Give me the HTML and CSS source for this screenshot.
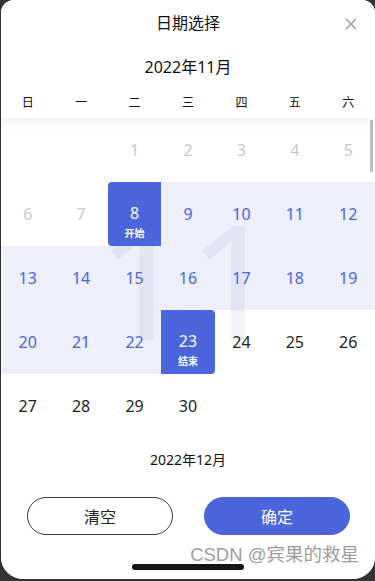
FILE: index.html
```html
<!DOCTYPE html>
<html lang="zh">
<head>
<meta charset="utf-8">
<meta name="viewport" content="width=device-width, initial-scale=1">
<title>日期选择</title>
<link rel="stylesheet" href="styles.css">
</head>
<body>
<div class="card">
  <div class="header">
    <div class="title">日期选择
      <svg class="close" viewBox="0 0 12 12" width="12" height="12"><path d="M1 1L11 11M11 1L1 11" stroke="#969799" stroke-width="1.4" fill="none"/></svg>
    </div>
    <div class="subtitle">2022年11月</div>
    <div class="weekdays">
      <span>日</span><span>一</span><span>二</span><span>三</span><span>四</span><span>五</span><span>六</span>
    </div>
  </div>
  <div class="body">
    <div class="days">
      <div class="mark">11</div>
      <div class="day"></div><div class="day"></div>
      <div class="day disabled">1</div><div class="day disabled">2</div><div class="day disabled">3</div><div class="day disabled">4</div><div class="day disabled">5</div>
      <div class="day disabled">6</div><div class="day disabled">7</div>
      <div class="day start">8<span class="info">开始</span></div>
      <div class="day mid">9</div><div class="day mid">10</div><div class="day mid">11</div><div class="day mid">12</div>
      <div class="day mid">13</div><div class="day mid">14</div><div class="day mid">15</div><div class="day mid">16</div><div class="day mid">17</div><div class="day mid">18</div><div class="day mid">19</div>
      <div class="day mid">20</div><div class="day mid">21</div><div class="day mid">22</div>
      <div class="day end">23<span class="info">结束</span></div>
      <div class="day">24</div><div class="day">25</div><div class="day">26</div>
      <div class="day">27</div><div class="day">28</div><div class="day">29</div><div class="day">30</div>
    </div>
    <div class="month-title">2022年12月</div>
  </div>
  <div class="scrollbar"></div>
  <div class="footer">
    <button class="btn clear">清空</button>
    <button class="btn confirm">确定</button>
  </div>
  <div class="home-bar"></div>
  <div class="wm">CSDN @宾果的救星</div>
</div>
</body>
</html>
```

FILE: styles.css
```css
html, body {
  margin: 0;
  padding: 0;
  background: #333333;
  width: 375px;
  height: 581px;
  overflow: hidden;
}
body {
  font-family: "Noto Sans", "Noto Sans CJK SC", sans-serif;
  color: #323233;
}
.card {
  position: relative;
  margin-left: 1px;
  width: 374px;
  height: 579px;
  background: #fff;
  border-radius: 13px 13px 22px 22px;
  overflow: hidden;
  display: flex;
  flex-direction: column;
}
.header {
  position: relative;
  z-index: 2;
  background: #fff;
  box-shadow: 0 2px 10px rgba(125, 126, 128, 0.16);
  flex: none;
}
.title {
  position: relative;
  height: 46px;
  line-height: 46px;
  text-align: center;
  font-size: 16px;
  color: #111;
}
.close {
  position: absolute;
  right: 18px;
  top: 18px;
  width: 12px;
  height: 12px;
}
.subtitle {
  height: 42px;
  line-height: 42px;
  text-align: center;
  font-size: 16px;
  color: #111;
}
.weekdays {
  display: grid;
  grid-template-columns: repeat(7, 1fr);
  height: 30px;
  line-height: 30px;
  font-size: 12px;
  text-align: center;
  color: #111;
}
.body {
  flex: 1;
  overflow: hidden;
  position: relative;
}
.days {
  position: relative;
  display: grid;
  grid-template-columns: repeat(7, 1fr);
  grid-auto-rows: 64px;
}
.mark {
  position: absolute;
  left: 50%;
  top: 50%;
  transform: translate(-50%, -50%);
  font-size: 160px;
  line-height: 1;
  color: rgba(240, 241, 244, 0.85);
  pointer-events: none;
}
.day {
  position: relative;
  display: flex;
  align-items: center;
  justify-content: center;
  font-size: 16px;
  color: #222;
}
.day.disabled {
  color: #c8c9cc;
}
.day.mid {
  color: #4b66dc;
  background: rgba(75, 102, 220, 0.1);
}
.day.start, .day.end {
  background: #4b66dc;
  color: #fff;
  padding-bottom: 2px;
  box-sizing: border-box;
}
.day.start {
  border-radius: 4px 0 0 4px;
}
.day.end {
  border-radius: 0 4px 4px 0;
}
.info {
  position: absolute;
  left: 0;
  right: 0;
  bottom: 6px;
  text-align: center;
  font-size: 10px;
  line-height: 14px;
  font-weight: bold;
}
.month-title {
  height: 44px;
  line-height: 44px;
  text-align: center;
  font-size: 14px;
  color: #111;
}
.scrollbar {
  position: absolute;
  right: 2px;
  top: 120px;
  width: 3px;
  height: 52px;
  background: #bdbdbd;
  border-radius: 1px;
}
.footer {
  flex: none;
  display: grid;
  grid-template-columns: 1fr 1fr;
  column-gap: 31px;
  padding: 15px 25px 44px 26px;
  background: #fff;
}
.btn {
  height: 38px;
  border-radius: 19px;
  font-family: "Noto Sans CJK SC", sans-serif;
  font-size: 16px;
  padding: 0;
}
.clear {
  background: #fff;
  border: 1px solid #3c3c3c;
  color: #222;
}
.confirm {
  background: #4b66dc;
  border: 1px solid #4b66dc;
  color: #fff;
}
.home-bar {
  position: absolute;
  left: 131px;
  top: 564px;
  width: 112px;
  height: 6px;
  border-radius: 3px;
  background: #151515;
}
.wm {
  position: absolute;
  right: 16px;
  top: 543px;
  font-family: "Liberation Sans", "Noto Sans CJK SC", sans-serif;
  font-size: 18.5px;
  line-height: 24px;
  color: #9d9d9d;
  text-shadow: 0 0 1px #fff, 0 0 2px #fff;
}
```
